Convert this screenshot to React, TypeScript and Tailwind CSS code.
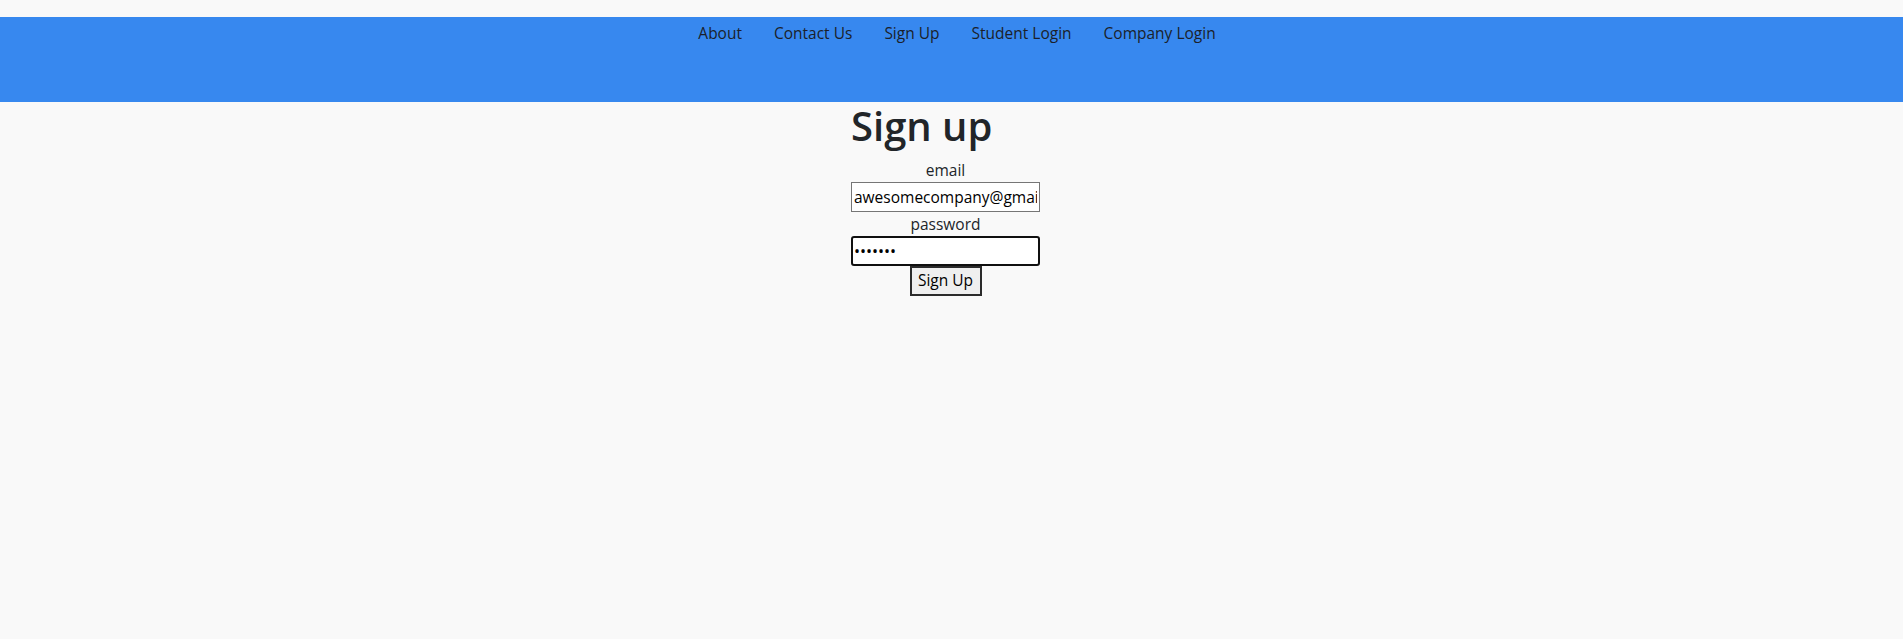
const navLinks = ["About", "Contact Us", "Sign Up", "Student Login", "Company Login"];

export default function App() {
  return (
    <div className="min-h-[639px] bg-[#f9f9f9] pt-[17px] text-[15.5px] text-[#212529] [font-family:'Open_Sans','Noto_Sans',sans-serif]">
      <nav className="h-[85px] bg-[#3788ef]">
        <ul className="flex justify-center gap-[32px] pt-[4px] pl-[11px]">
          {navLinks.map((link) => (
            <li key={link} className="leading-[24px] text-[#1b1f2a]">
              <a href="#">{link}</a>
            </li>
          ))}
        </ul>
      </nav>

      <div className="flex justify-center pr-[12px]">
        <form className="flex w-[189px] flex-col items-center" onSubmit={(e) => e.preventDefault()}>
          <h1 className="mb-[8px] w-full text-left text-[40px] font-semibold leading-[48px]">Sign up</h1>
          <label htmlFor="email" className="leading-[24px]">email</label>
          <input
            id="email"
            type="text"
            defaultValue="awesomecompany@gmail.com"
            className="h-[30px] w-[189px] border border-[#767676] bg-white px-[2px] text-[15.5px] text-black outline-none"
          />
          <label htmlFor="password" className="leading-[24px]">password</label>
          <input
            id="password"
            type="password"
            defaultValue="1234567"
            className="h-[30px] w-[189px] rounded-[3px] border-2 border-[#101010] bg-white px-[1px] text-[16px] text-black outline-none"
          />
          <button
            type="submit"
            className="h-[30px] w-[72px] border-2 border-[#2b2b2b] bg-[#efefef] text-[15.5px] leading-none text-black"
          >
            Sign Up
          </button>
        </form>
      </div>
    </div>
  );
}
